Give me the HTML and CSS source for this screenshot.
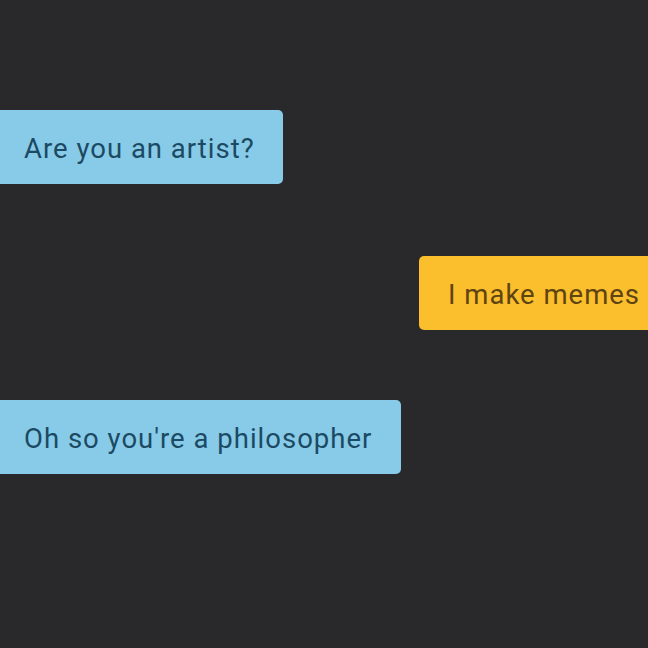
FILE: index.html
```html
<!DOCTYPE html>
<html>
<head>
<meta charset="utf-8">
<link rel="stylesheet" href="styles.css">
</head>
<body>
<div class="chat">
  <div class="bubble left blue b1">Are you an artist?</div>
  <div class="bubble right yellow b2">I make memes</div>
  <div class="bubble left blue b3">Oh so you're a philosopher</div>
</div>
</body>
</html>
```
FILE: styles.css
```css
html, body {
  margin: 0;
  padding: 0;
  background: #29292b;
  width: 648px;
  height: 648px;
  overflow: hidden;
}
.chat {
  display: flex;
  flex-direction: column;
  padding-top: 110px;
}
.bubble {
  height: 74px;
  box-sizing: border-box;
  display: flex;
  align-items: center;
  font-family: "Roboto", "DejaVu Sans", sans-serif;
  font-size: 27.5px;
  letter-spacing: 1px;
  white-space: nowrap;
  padding-top: 2px;
}
.left {
  align-self: flex-start;
  border-radius: 0 5px 5px 0;
  padding-left: 24px;
}
.right {
  align-self: flex-end;
  border-radius: 5px 0 0 5px;
  padding-left: 29px;
}
.blue {
  background: #88cbe9;
  color: #1c4a62;
}
.yellow {
  background: #fbbe2c;
  color: #5e4412;
}
.b1 { width: 283px; }
.b2 { width: 229px; margin-top: 72px; }
.b3 { width: 401px; margin-top: 70px; }
```
